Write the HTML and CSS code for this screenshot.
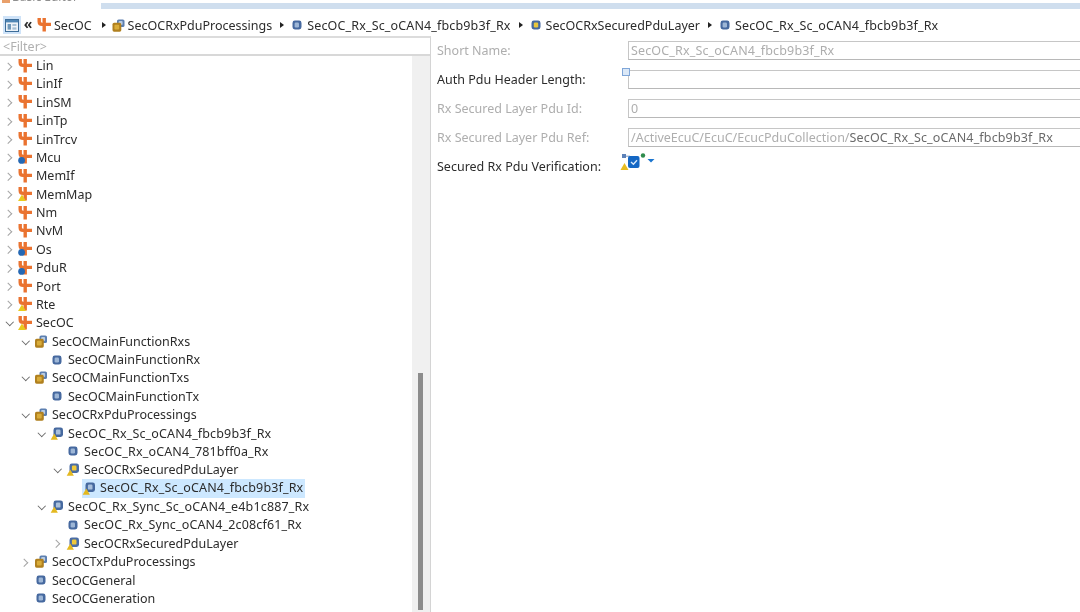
FILE: index.html
```html
<!DOCTYPE html>
<html lang="en">
<head>
<meta charset="utf-8">
<title>SecOC Basic Editor</title>
<link rel="stylesheet" href="styles.css">
</head>
<body>
<svg class="defs" width="0" height="0" aria-hidden="true">
  <defs>
    <symbol id="fork" viewBox="0 0 14 14">
      <path d="M2.2 0V3.6Q2.2 6.4 5 6.4H14M7.2 0V13.5" fill="none" stroke="#ea7330" stroke-width="3.4"/>
    </symbol>
    <symbol id="forkb" viewBox="0 0 14 14">
      <path d="M2.2 0V3.6Q2.2 6.4 5 6.4H14M7.2 0V13.5" fill="none" stroke="#ea7330" stroke-width="3.4"/>
      <circle cx="3.6" cy="10.4" r="3.4" fill="#2568b4"/>
    </symbol>
    <symbol id="forky" viewBox="0 0 14 14">
      <path d="M2.2 0V3.6Q2.2 6.4 5 6.4H14M7.2 0V13.5" fill="none" stroke="#ea7330" stroke-width="3.4"/>
      <path d="M4 7.5L8 14H0Z" fill="#e8cb1e"/>
    </symbol>
    <symbol id="box" viewBox="0 0 13 13">
      <rect x="5" y="0.5" width="7.5" height="7.5" rx="1.6" fill="#5c7fb0"/>
      <rect x="6.6" y="2" width="4" height="4" rx="1" fill="#b8cbe2"/>
      <rect x="0.5" y="3.8" width="8.8" height="8.9" rx="1.6" fill="#b0801f"/>
      <rect x="2.4" y="5.8" width="4.8" height="4.6" rx="1" fill="#d9ac3a"/>
    </symbol>
    <symbol id="param" viewBox="0 0 10 10">
      <rect x="0.5" y="0.5" width="9" height="9" rx="2.4" fill="#46699f"/>
      <rect x="2.6" y="2.6" width="4.4" height="4.8" rx="1.2" fill="#9db6d6"/>
    </symbol>
    <symbol id="paramw" viewBox="0 0 13 13">
      <rect x="3" y="0.5" width="9.5" height="9.5" rx="2.4" fill="#46699f"/>
      <rect x="5.4" y="2.6" width="4.6" height="5" rx="1.2" fill="#a8bfdb"/>
      <path d="M3.8 6.5L7.4 12.8H0.2Z" fill="#e4b920"/>
    </symbol>
    <symbol id="layer" viewBox="0 0 13 13">
      <rect x="3" y="0.5" width="9.5" height="9.5" rx="2.4" fill="#4a6da5"/>
      <rect x="5.4" y="2.6" width="4.6" height="5" rx="1.2" fill="#f0c93a"/>
      <path d="M3.8 6.5L7.4 12.8H0.2Z" fill="#e4b920"/>
    </symbol>
    <symbol id="layerc" viewBox="0 0 10 10">
      <rect x="0.5" y="0.5" width="9" height="9" rx="2.4" fill="#46699f"/>
      <rect x="2.8" y="2.6" width="4.4" height="4.8" rx="1.2" fill="#e8c73d"/>
    </symbol>
  </defs>
</svg>

<div class="page">
  <header class="topstrip">
    <div class="tab"><span class="tab-dot"></span><span class="tab-text">Basic Editor</span></div>
    <div class="tabband"></div>
  </header>

  <nav class="crumbs">
    <span class="toggle"><svg width="14" height="13" viewBox="0 0 14 13"><rect x="0.5" y="0.5" width="13" height="12" fill="#eef3f8" stroke="#3d6d99"/><rect x="1" y="1" width="12" height="2.4" fill="#4f86b5"/><rect x="2.6" y="5" width="3.4" height="5.6" fill="#6f98ba"/><rect x="7.4" y="5" width="4" height="2" fill="#a5bfd4"/><rect x="7.4" y="8.4" width="4" height="2.2" fill="#a5bfd4"/></svg></span>
    <span class="chev2">«</span>
    <svg class="c-fork" width="14" height="14"><use href="#fork"/></svg>
    <span class="c-text c-first">SecOC</span>
    <span class="arrow"></span>
    <svg class="c-box" width="13" height="13"><use href="#box"/></svg>
    <span class="c-text">SecOCRxPduProcessings</span>
    <span class="arrow"></span>
    <svg class="c-par" width="10" height="10"><use href="#param"/></svg>
    <span class="c-text id">SecOC_Rx_Sc_oCAN4_fbcb9b3f_Rx</span>
    <span class="arrow"></span>
    <svg class="c-par" width="10" height="10"><use href="#layerc"/></svg>
    <span class="c-text">SecOCRxSecuredPduLayer</span>
    <span class="arrow"></span>
    <svg class="c-par" width="10" height="10"><use href="#param"/></svg>
    <span class="c-text id">SecOC_Rx_Sc_oCAN4_fbcb9b3f_Rx</span>
  </nav>

  <main class="panes">
    <section class="left">
      <div class="filter">&lt;Filter&gt;</div>
      <div class="treewrap">
        <ul class="tree">
          <li class="row d0"><i class="tw closed"></i><svg class="ic" width="14" height="14"><use href="#fork"/></svg><span>Lin</span></li>
          <li class="row d0"><i class="tw closed"></i><svg class="ic" width="14" height="14"><use href="#fork"/></svg><span>LinIf</span></li>
          <li class="row d0"><i class="tw closed"></i><svg class="ic" width="14" height="14"><use href="#fork"/></svg><span>LinSM</span></li>
          <li class="row d0"><i class="tw closed"></i><svg class="ic" width="14" height="14"><use href="#fork"/></svg><span>LinTp</span></li>
          <li class="row d0"><i class="tw closed"></i><svg class="ic" width="14" height="14"><use href="#fork"/></svg><span>LinTrcv</span></li>
          <li class="row d0"><i class="tw closed"></i><svg class="ic" width="14" height="14"><use href="#forkb"/></svg><span>Mcu</span></li>
          <li class="row d0"><i class="tw closed"></i><svg class="ic" width="14" height="14"><use href="#fork"/></svg><span>MemIf</span></li>
          <li class="row d0"><i class="tw closed"></i><svg class="ic" width="14" height="14"><use href="#forky"/></svg><span>MemMap</span></li>
          <li class="row d0"><i class="tw closed"></i><svg class="ic" width="14" height="14"><use href="#fork"/></svg><span>Nm</span></li>
          <li class="row d0"><i class="tw closed"></i><svg class="ic" width="14" height="14"><use href="#fork"/></svg><span>NvM</span></li>
          <li class="row d0"><i class="tw closed"></i><svg class="ic" width="14" height="14"><use href="#forkb"/></svg><span>Os</span></li>
          <li class="row d0"><i class="tw closed"></i><svg class="ic" width="14" height="14"><use href="#forkb"/></svg><span>PduR</span></li>
          <li class="row d0"><i class="tw closed"></i><svg class="ic" width="14" height="14"><use href="#fork"/></svg><span>Port</span></li>
          <li class="row d0"><i class="tw closed"></i><svg class="ic" width="14" height="14"><use href="#forky"/></svg><span>Rte</span></li>
          <li class="row d0"><i class="tw open"></i><svg class="ic" width="14" height="14"><use href="#forky"/></svg><span>SecOC</span></li>
          <li class="row d1"><i class="tw open"></i><svg class="ic" width="13" height="13"><use href="#box"/></svg><span>SecOCMainFunctionRxs</span></li>
          <li class="row d2"><i class="tw"></i><svg class="ic" width="10" height="10"><use href="#param"/></svg><span>SecOCMainFunctionRx</span></li>
          <li class="row d1"><i class="tw open"></i><svg class="ic" width="13" height="13"><use href="#box"/></svg><span>SecOCMainFunctionTxs</span></li>
          <li class="row d2"><i class="tw"></i><svg class="ic" width="10" height="10"><use href="#param"/></svg><span>SecOCMainFunctionTx</span></li>
          <li class="row d1"><i class="tw open"></i><svg class="ic" width="13" height="13"><use href="#box"/></svg><span>SecOCRxPduProcessings</span></li>
          <li class="row d2"><i class="tw open"></i><svg class="ic" width="13" height="13"><use href="#paramw"/></svg><span class="id">SecOC_Rx_Sc_oCAN4_fbcb9b3f_Rx</span></li>
          <li class="row d3"><i class="tw"></i><svg class="ic" width="10" height="10"><use href="#param"/></svg><span class="id">SecOC_Rx_oCAN4_781bff0a_Rx</span></li>
          <li class="row d3"><i class="tw open"></i><svg class="ic" width="13" height="13"><use href="#layer"/></svg><span>SecOCRxSecuredPduLayer</span></li>
          <li class="row d4"><i class="tw"></i><svg class="ic" width="13" height="13"><use href="#paramw"/></svg><span class="sel id">SecOC_Rx_Sc_oCAN4_fbcb9b3f_Rx</span></li>
          <li class="row d2"><i class="tw open"></i><svg class="ic" width="13" height="13"><use href="#paramw"/></svg><span class="id">SecOC_Rx_Sync_Sc_oCAN4_e4b1c887_Rx</span></li>
          <li class="row d3"><i class="tw"></i><svg class="ic" width="10" height="10"><use href="#param"/></svg><span class="id">SecOC_Rx_Sync_oCAN4_2c08cf61_Rx</span></li>
          <li class="row d3"><i class="tw closed"></i><svg class="ic" width="13" height="13"><use href="#layer"/></svg><span>SecOCRxSecuredPduLayer</span></li>
          <li class="row d1"><i class="tw closed"></i><svg class="ic" width="13" height="13"><use href="#box"/></svg><span>SecOCTxPduProcessings</span></li>
          <li class="row d1"><i class="tw"></i><svg class="ic" width="10" height="10"><use href="#param"/></svg><span>SecOCGeneral</span></li>
          <li class="row d1"><i class="tw"></i><svg class="ic" width="10" height="10"><use href="#param"/></svg><span>SecOCGeneration</span></li>
        </ul>
        <div class="scroll"><div class="thumb"></div></div>
      </div>
    </section>

    <section class="form">
      <div class="field"><label class="lbl off">Short Name:</label><div class="inp off id">SecOC_Rx_Sc_oCAN4_fbcb9b3f_Rx</div></div>
      <div class="field marked"><label class="lbl">Auth Pdu Header Length:</label><div class="inp"></div></div>
      <div class="field"><label class="lbl off">Rx Secured Layer Pdu Id:</label><div class="inp off">0</div></div>
      <div class="field"><label class="lbl off">Rx Secured Layer Pdu Ref:</label><div class="inp off">/ActiveEcuC/EcuC/EcucPduCollection/<span class="dark id">SecOC_Rx_Sc_oCAN4_fbcb9b3f_Rx</span></div></div>
      <div class="field check"><label class="lbl">Secured Rx Pdu Verification:</label>
        <svg class="chk" width="38" height="20" viewBox="0 0 38 20">
          <rect x="2" y="1" width="4" height="4" fill="#5d82b8"/>
          <path d="M6 3.2H10" stroke="#7e9cc4" stroke-width="1"/>
          <rect x="8" y="3" width="11.5" height="12" rx="2" fill="#1467c4"/>
          <path d="M11 9L13.4 11.2L17 7.2" fill="none" stroke="#d6e8fb" stroke-width="1.4"/>
          <circle cx="23" cy="2.5" r="2.2" fill="#2e8b4c"/>
          <path d="M4.5 10L8.5 17H0.5Z" fill="#e8bd20"/>
          <path d="M27.5 6H34.5L31 9.5Z" fill="#1b75cf"/>
        </svg>
      </div>
    </section>
  </main>
</div>
</body>
</html>
```

FILE: styles.css
```css
* { box-sizing: border-box; }
html, body { margin: 0; padding: 0; height: 100%; background: #fff; overflow: hidden; }
body { font-family: "Noto Sans", "Open Sans", sans-serif; font-size: 12.5px; color: #2c2c2c; }
.defs { position: absolute; }
.page { width: 1080px; height: 612px; display: flex; flex-direction: column; filter: blur(0.35px); }
.id { letter-spacing: 0.15px; }

.topstrip { height: 10px; display: flex; flex: none; }
.tab { width: 101px; height: 3px; overflow: hidden; display: flex; align-items: flex-end; gap: 2px; padding-left: 2px; }
.tab-dot { width: 8px; height: 8px; flex: none; background: #e9a06b; }
.tab-text { color: #8f8f8f; font-size: 12px; line-height: 12px; flex: none; }
.tabband { flex: 1; height: 6px; margin-top: 3px; background: #cfdeee; }

.crumbs { height: 26px; flex: none; display: flex; align-items: center; padding-top: 4px; white-space: nowrap; }
.toggle { width: 18px; height: 18px; margin-left: 3px; background: #cfe3f8; display: flex; align-items: center; justify-content: center; flex: none; }
.chev2 { width: 14px; text-align: center; font-size: 14px; font-weight: 700; line-height: 14px; margin-top: -3px; flex: none; }
.c-fork { margin-left: 2px; margin-right: 3px; flex: none; }
.c-text { flex: none; }
.arrow { width: 0; height: 0; margin: 0 7px 0 8px; border-left: 4px solid #222; border-top: 3.5px solid transparent; border-bottom: 3.5px solid transparent; flex: none; }
.c-first + .arrow { margin: 0 5px 0 10px; }
.c-box { margin: 0 3px 0 1px; flex: none; }
.c-par { margin: 0 5px 0 1px; flex: none; }

.panes { flex: 1; display: flex; min-height: 0; }
.left { width: 431px; flex: none; display: flex; flex-direction: column; border-top: 2px solid #dcdcdc; border-right: 1px solid #d4d4d4; }
.filter { height: 18px; padding: 1px 0 0 3px; line-height: 15px; color: #b0b0b0; border-bottom: 2px solid #d8d8d8; flex: none; }
.treewrap { flex: 1; display: flex; min-height: 0; }
.tree { list-style: none; margin: 0; padding: 0.4px 0 0; flex: 1; }
.row { height: 18.38px; display: flex; align-items: center; white-space: nowrap; }
.d0 { padding-left: 3px; }
.d1 { padding-left: 19px; }
.d2 { padding-left: 35px; }
.d3 { padding-left: 51px; }
.d4 { padding-left: 67px; }
.tw { width: 14px; height: 14px; flex: none; position: relative; display: block; }
.tw.closed::before, .tw.open::before { content: ""; position: absolute; width: 4.5px; height: 4.5px; border-right: 1.2px solid #a6a6a6; border-bottom: 1.2px solid #a6a6a6; }
.tw.closed::before { left: 2px; top: 5px; transform: rotate(-45deg); }
.tw.open::before { left: 4px; top: 3.5px; transform: rotate(45deg); border-color: #666; }
.ic { width: 16px; flex: none; margin-right: 3px; }
.sel { background: #cde8ff; margin-left: -18px; padding-left: 18px; padding-right: 2px; height: 19px; line-height: 18px; }
.d4 .ic { position: relative; z-index: 1; }

.scroll { width: 18px; flex: none; background: #f0f0f0; position: relative; }
.thumb { position: absolute; left: 6px; top: 317px; bottom: 2px; width: 5px; background: #8c8c8c; }

.form { flex: 1; min-width: 0; padding: 5px 0 0 6px; }
.field { display: flex; height: 29px; align-items: flex-start; white-space: nowrap; }
.lbl { width: 191px; flex: none; line-height: 19px; }
.lbl.off { color: #aeaeae; }
.inp { flex: 1; height: 19px; line-height: 17px; padding: 0 0 0 2px; border: 1px solid #c6c6c6; border-right: 0; border-bottom-color: #b8b8b8; overflow: hidden; }
.inp.off { color: #aeaeae; }
.dark { color: #6a6a6a; }
.marked { position: relative; }
.marked::before { content: ""; position: absolute; left: 185px; top: -2px; width: 6px; height: 6px; border: 1px solid #7fa6d8; background: #dbe8f7; }
.check .lbl { line-height: 19px; }
.chk { margin-left: -8px; margin-top: -4px; flex: none; }
```
